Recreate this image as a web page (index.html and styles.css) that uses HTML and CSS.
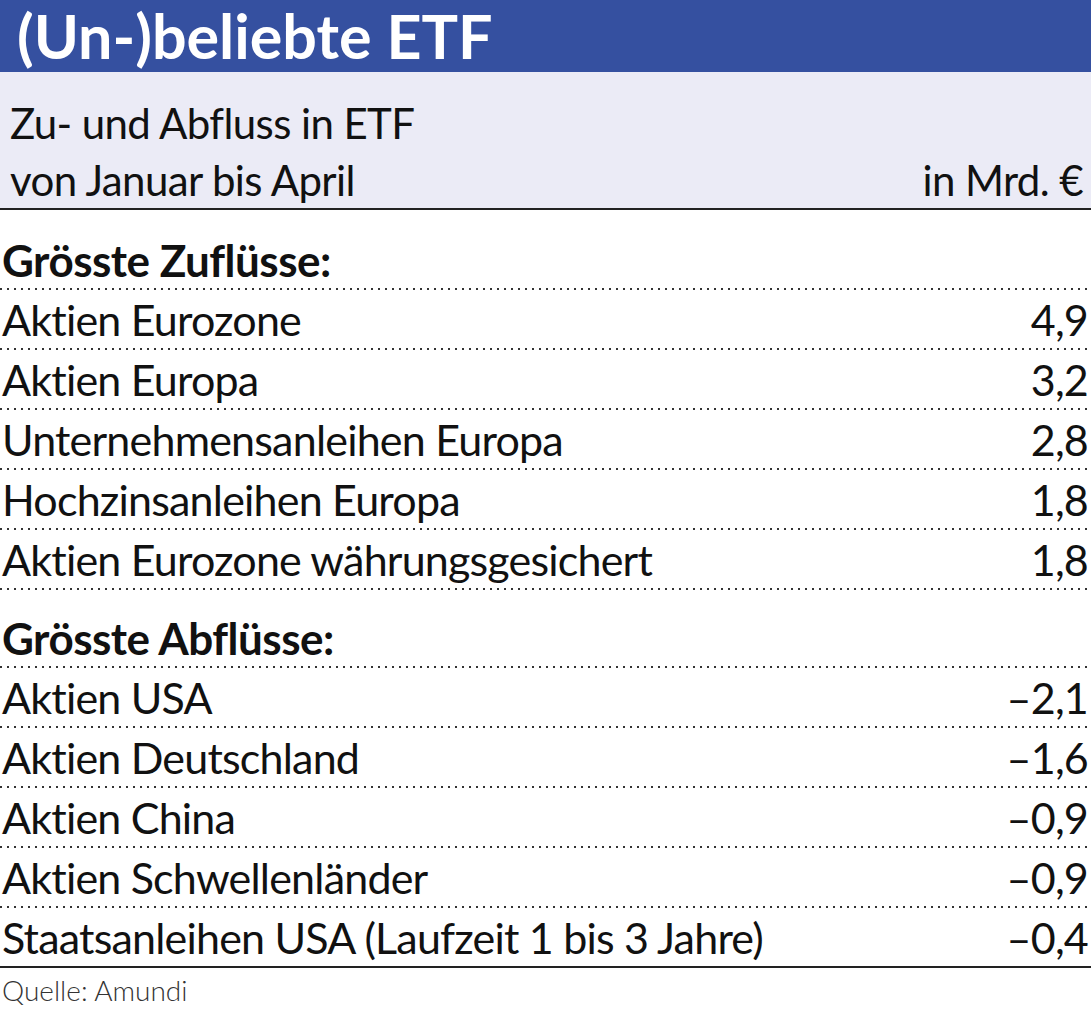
FILE: index.html
```html
<!DOCTYPE html>
<html lang="de">
<head>
<meta charset="utf-8">
<title>(Un-)beliebte ETF</title>
<link rel="stylesheet" href="styles.css">
</head>
<body>
<div class="chart">
  <header class="title-bar">
    <h1 class="title">(Un-)beliebte ETF</h1>
  </header>
  <div class="subtitle">
    <div class="subtitle-left">
      <div>Zu- und Abfluss in ETF</div>
      <div>von Januar bis April</div>
    </div>
    <div class="unit">in Mrd. €</div>
  </div>
  <div class="section">
    <div class="heading heading-first">Grösste Zuflüsse:</div>
    <div class="row"><span>Aktien Eurozone</span><span>4,9</span></div>
    <div class="row"><span>Aktien Europa</span><span>3,2</span></div>
    <div class="row"><span>Unternehmensanleihen Europa</span><span>2,8</span></div>
    <div class="row"><span>Hochzinsanleihen Europa</span><span>1,8</span></div>
    <div class="row"><span>Aktien Eurozone währungsgesichert</span><span>1,8</span></div>
  </div>
  <div class="section">
    <div class="heading">Grösste Abflüsse:</div>
    <div class="row"><span>Aktien USA</span><span>–2,1</span></div>
    <div class="row"><span>Aktien Deutschland</span><span>–1,6</span></div>
    <div class="row"><span>Aktien China</span><span>–0,9</span></div>
    <div class="row"><span>Aktien Schwellenländer</span><span>–0,9</span></div>
    <div class="row row-last"><span>Staatsanleihen USA (Laufzeit 1 bis 3 Jahre)</span><span>–0,4</span></div>
  </div>
  <div class="source">Quelle: Amundi</div>
</div>
</body>
</html>
```

FILE: styles.css
```css
* { box-sizing: border-box; }
html, body { margin: 0; padding: 0; background: #ffffff; }
body {
  font-family: Lato, "Open Sans", "Liberation Sans", sans-serif;
  color: #111111;
  font-variant-ligatures: no-common-ligatures;
}
.chart { width: 1091px; }

.title-bar {
  background: #3550a0;
  height: 72px;
  padding-left: 17px;
}
.title {
  margin: 0;
  font-size: 61px;
  font-weight: 700;
  line-height: 72px;
  color: #ffffff;
}

.subtitle {
  background: #ebebf6;
  height: 138px;
  padding: 23px 8px 0 10px;
  display: flex;
  justify-content: space-between;
  align-items: flex-start;
  border-bottom: 2px solid #222222;
  font-size: 42px;
  letter-spacing: -0.6px;
  line-height: 57px;
}
.unit { margin-top: 57px; }

.heading {
  font-size: 44px;
  font-weight: 700;
  letter-spacing: -0.5px;
  line-height: 60px;
  height: 78px;
  padding: 18px 0 0 2px;
  background-image: linear-gradient(to right, #333 0 2px, transparent 2px 7px);
  background-size: 7px 2px;
  background-repeat: repeat-x;
  background-position: 0 100%;
}
.heading-first { height: 80px; padding-top: 20px; }

.row {
  display: flex;
  justify-content: space-between;
  height: 60px;
  font-size: 43px;
  letter-spacing: -0.8px;
  line-height: 60px;
  padding: 0 3px 0 2px;
  background-image: linear-gradient(to right, #333 0 2px, transparent 2px 7px);
  background-size: 7px 2px;
  background-repeat: repeat-x;
  background-position: 0 100%;
}
.row-last {
  background: none;
  border-bottom: 2px solid #222222;
}

.source {
  font-size: 28px;
  font-weight: 300;
  color: #333333;
  padding: 5px 0 0 2px;
}
```
